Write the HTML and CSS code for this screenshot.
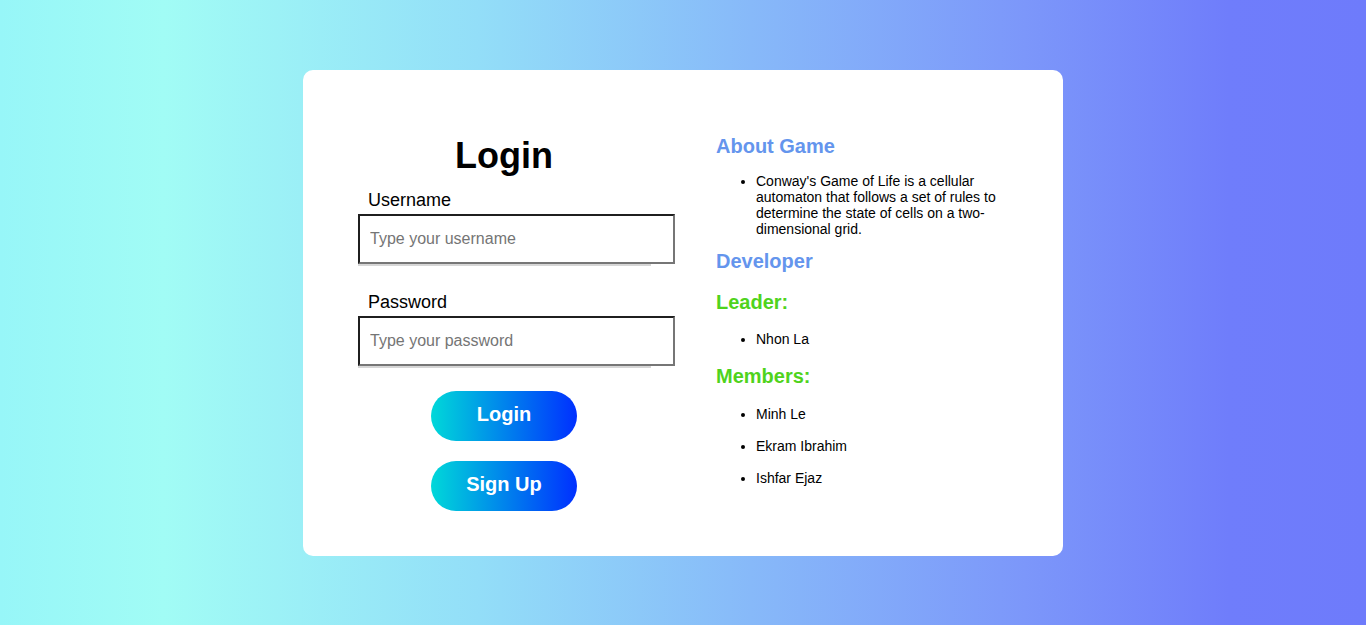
FILE: index.html
```html
<!DOCTYPE html>
<html lang="en">
<head>
<meta charset="utf-8">
<title>Login - Game of Life</title>
<link rel="stylesheet" href="styles.css">
</head>
<body>
<main class="card">
  <section class="login">
    <h1 class="login-title">Login</h1>
    <form class="login-form">
      <label class="field-label" for="username">Username</label>
      <div class="field-wrap">
        <input class="field-input" id="username" type="text" placeholder="Type your username">
      </div>
      <label class="field-label field-label-second" for="password">Password</label>
      <div class="field-wrap">
        <input class="field-input" id="password" type="password" placeholder="Type your password">
      </div>
      <div class="actions">
        <button class="btn" type="button">Login</button>
        <button class="btn" type="button">Sign Up</button>
      </div>
    </form>
  </section>
  <section class="info">
    <h3 class="info-title about-title">About Game</h3>
    <ul class="info-list about-list">
      <li>Conway's Game of Life is a cellular automaton that follows a set of rules to determine the state of cells on a two-dimensional grid.</li>
    </ul>
    <h3 class="info-title dev-title">Developer</h3>
    <h3 class="role-title leader-title">Leader:</h3>
    <ul class="info-list leader-list">
      <li>Nhon La</li>
    </ul>
    <h3 class="role-title members-title">Members:</h3>
    <ul class="info-list members-list">
      <li>Minh Le</li>
      <li>Ekram Ibrahim</li>
      <li>Ishfar Ejaz</li>
    </ul>
  </section>
</main>
</body>
</html>
```

FILE: styles.css
```css
* { box-sizing: border-box; }

html, body {
  margin: 0;
  padding: 0;
}

body {
  height: 625px;
  display: flex;
  align-items: center;
  justify-content: center;
  font-family: "Liberation Sans", Arial, sans-serif;
  background: linear-gradient(90deg, #97f6f8 0%, #a1fcf5 12%, #93def8 35%, #87b9f9 55%, #7c97fa 75%, #6f7dfb 90%, #6e7bfb 100%);
  overflow: hidden;
}

.card {
  width: 760px;
  height: 486px;
  background: #fff;
  border-radius: 10px;
  padding: 64px 55px 45px;
  display: grid;
  grid-template-columns: 292px 292px;
  column-gap: 66px;
  align-items: start;
}

/* Left column */
.login-title {
  margin: 1px 0 0;
  font-size: 36px;
  font-weight: bold;
  text-align: center;
  line-height: 41px;
  color: #000;
}

.login-form {
  display: flex;
  flex-direction: column;
  margin-top: 14px;
}

.field-label {
  display: block;
  font-size: 18px;
  line-height: 21px;
  padding-left: 10px;
  color: #000;
  margin-bottom: 3px;
}

.field-label-second {
  margin-top: 26px;
}

.field-wrap {
  width: 293px;
  border-bottom: 2px solid #d6d6d6;
}

.field-input {
  display: block;
  width: 317px;
  height: 50px;
  margin: 0;
  padding: 0 10px;
  border: 2px solid;
  border-color: #1f1f1f #767676 #767676 #1f1f1f;
  font-family: "Liberation Sans", Arial, sans-serif;
  font-size: 16px;
  color: #000;
  background: #fff;
  outline: none;
}

.field-input::placeholder {
  color: #757575;
}

.actions {
  display: flex;
  flex-direction: column;
  align-items: center;
  gap: 20px;
  margin-top: 23px;
}

.btn {
  width: 146px;
  height: 50px;
  border: none;
  border-radius: 25px;
  background: linear-gradient(90deg, #00d8d9 0%, #0030ff 100%);
  color: #fff;
  font-family: "Liberation Sans", Arial, sans-serif;
  font-size: 20px;
  font-weight: bold;
  padding: 0 0 3px;
  cursor: pointer;
}

/* Right column */
.info {
  color: #000;
  margin-top: 1px;
}

.info-title,
.role-title {
  margin: 0;
  font-size: 20px;
  line-height: 23px;
  font-weight: bold;
}

.info-title { color: #6495ed; }
.role-title { color: #4fd31c; }

.info-list {
  margin: 0;
  padding-left: 40px;
  font-size: 14px;
  line-height: 16px;
}

.about-title { margin-bottom: 15px; }
.about-list { margin-bottom: 13px; }
.dev-title { margin-bottom: 18px; }
.leader-title { margin-bottom: 17px; }
.leader-list { margin-bottom: 18px; }
.members-title { margin-bottom: 18px; }
.members-list li + li { margin-top: 16px; }
```
